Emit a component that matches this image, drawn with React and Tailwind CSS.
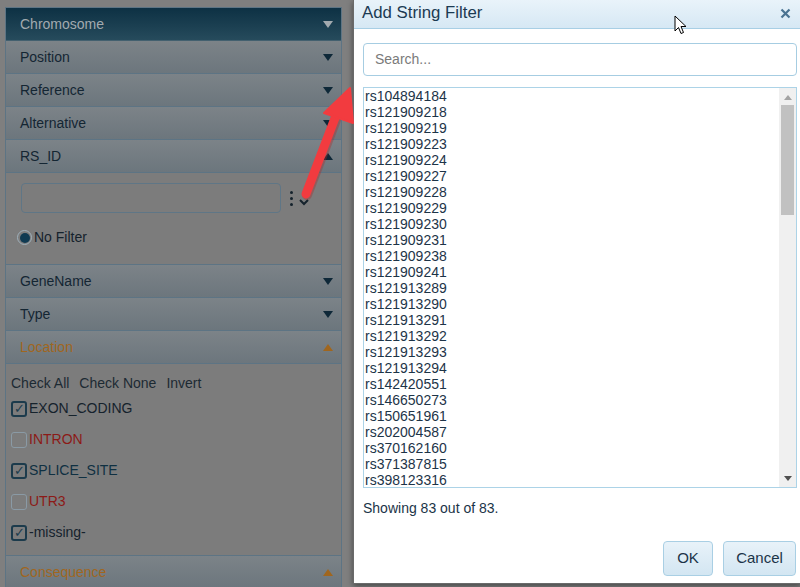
import React from "react";

const ids = [
  "rs104894184", "rs121909218", "rs121909219", "rs121909223", "rs121909224",
  "rs121909227", "rs121909228", "rs121909229", "rs121909230", "rs121909231",
  "rs121909238", "rs121909241", "rs121913289", "rs121913290", "rs121913291",
  "rs121913292", "rs121913293", "rs121913294", "rs142420551", "rs146650273",
  "rs150651961", "rs202004587", "rs370162160", "rs371387815", "rs398123316",
];

function Tri({ up, color }) {
  return (
    <svg width="10" height="7" viewBox="0 0 10 7">
      {up ? <path d="M0 7 L5 0 L10 7 Z" fill={color} /> : <path d="M0 0 L10 0 L5 7 Z" fill={color} />}
    </svg>
  );
}

function Header({ label, up, active, open }) {
  if (active) {
    return (
      <div className="h-[33px] flex items-center justify-between pl-[14px] pr-[8px] border-b border-[#43606f] bg-gradient-to-b from-[#0d3144] to-[#264b5c] text-[#a2aaaf]">
        <span>{label}</span>
        <Tri color="#a2aaaf" />
      </div>
    );
  }
  return (
    <div className="h-[33px] flex items-center justify-between pl-[14px] pr-[8px] border-b border-[#5d7484] bg-gradient-to-b from-[#7c8388] to-[#6c767d]">
      <span className={open ? "text-[#a0661e]" : "text-[#142633]"}>{label}</span>
      <Tri up={up} color={open ? "#a0661e" : "#0e2838"} />
    </div>
  );
}

function Check({ checked, label, red }) {
  return (
    <div className="h-[31px] flex items-center">
      {checked ? (
        <span className="w-[16px] h-[16px] rounded-[3px] border-2 border-[#1c3b4c] flex items-center justify-center text-[13px] leading-none text-[#1c3b4c]">
          ✓
        </span>
      ) : (
        <span className="w-[16px] h-[16px] rounded-[3px] border border-[#8a9aa5]" />
      )}
      <span className={"ml-[2px] " + (red ? "text-[#8c1a17]" : label === "SPLICE_SITE" ? "text-[#0f3042]" : "text-[#15222c]")}>
        {label}
      </span>
    </div>
  );
}

export default function App() {
  return (
    <div className="relative w-[800px] h-[587px] overflow-hidden bg-[#7f7f7f] font-['Liberation_Sans',Arial,sans-serif] text-[14px]">
      {/* side filter panel (dimmed behind dialog) */}
      <div className="pt-[7px] pl-[5px]">
        <div className="w-[337px] border-x border-t border-[#5d7484]">
          <Header label="Chromosome" active />
          <Header label="Position" />
          <Header label="Reference" />
          <Header label="Alternative" />
          <Header label="RS_ID" up />
          <div className="h-[92px] border-b border-[#5d7484] bg-[#7c7c7c] pt-[10px] pl-[15px]">
            <div className="flex items-center">
              <div className="w-[260px] h-[30px] rounded-[4px] border border-[#5f7686]" />
              <div className="ml-[9px] flex flex-col gap-[3px]">
                <span className="w-[3px] h-[3px] rounded-full bg-[#14222c]" />
                <span className="w-[3px] h-[3px] rounded-full bg-[#14222c]" />
                <span className="w-[3px] h-[3px] rounded-full bg-[#14222c]" />
              </div>
              <svg className="ml-[6px] mt-[8px]" width="10" height="7" viewBox="0 0 10 7">
                <path d="M1 1 L5 5 L9 1" fill="none" stroke="#14222c" strokeWidth="2" />
              </svg>
            </div>
            <div className="mt-[14px] -ml-[4px] flex items-center">
              <span className="w-[15px] h-[15px] rounded-full border-[1.5px] border-[#9fb0bb] flex items-center justify-center">
                <span className="w-[10px] h-[10px] rounded-full bg-[#0f3a52]" />
              </span>
              <span className="ml-[2px] text-[#15222c]">No Filter</span>
            </div>
          </div>
          <Header label="GeneName" />
          <Header label="Type" />
          <Header label="Location" up open />
          <div className="h-[192px] border-b border-[#5d7484] bg-[#7c7c7c] pl-[5px] pt-[10px]">
            <div className="flex gap-[10px] text-[#1c2a33] h-[19px] items-center">
              <span>Check All</span>
              <span>Check None</span>
              <span>Invert</span>
            </div>
            <div>
              <Check checked label="EXON_CODING" />
              <Check label="INTRON" red />
              <Check checked label="SPLICE_SITE" />
              <Check label="UTR3" red />
              <Check checked label="-missing-" />
            </div>
          </div>
          <Header label="Consequence" up open />
        </div>
      </div>

      {/* dialog */}
      <div className="absolute left-[353px] top-0 w-[448px] h-[584px] bg-white border-l border-b border-[#6a6a6a] shadow-[0_2px_6px_rgba(0,0,0,0.45)] flex flex-col">
        <div className="h-[29px] flex items-center justify-between pl-[8px] pr-[10px] pb-[2px] border-b border-[#a8cfe5] bg-gradient-to-b from-[#e9f3fa] to-[#d6e8f4]">
          <span className="text-[16.8px] text-[#1b3a52]">Add String Filter</span>
          <svg width="11" height="11" viewBox="0 0 11 11">
            <path d="M1.5 1.5 L9.5 9.5 M9.5 1.5 L1.5 9.5" stroke="#4a7391" strokeWidth="2.2" />
          </svg>
        </div>
        <div className="pl-[9px] pr-[4px] flex flex-col flex-1">
          <div className="mt-[14px] h-[33px] rounded-[4px] border border-[#a6cde2] flex items-center pl-[11px] text-[#7a7a7a]">
            Search...
          </div>
          <div className="mt-[11px] h-[401px] border border-[#acd3e7] flex overflow-hidden">
            <div className="flex-1 overflow-hidden pl-[1px] text-[#1d3448] leading-[16px]">
              {ids.map((id) => (
                <div key={id}>{id}</div>
              ))}
            </div>
            <div className="w-[17px] bg-[#f0f0f0] flex flex-col items-center">
              <svg className="mt-[7px]" width="8" height="5" viewBox="0 0 8 5">
                <path d="M0 5 L4 0 L8 5 Z" fill="#a3a3a3" />
              </svg>
              <div className="mt-[5px] w-[13px] h-[110px] bg-[#c1c1c1]" />
              <div className="flex-1" />
              <svg className="mb-[6px]" width="8" height="5" viewBox="0 0 8 5">
                <path d="M0 0 L8 0 L4 5 Z" fill="#505050" />
              </svg>
            </div>
          </div>
          <div className="mt-[10px] text-[#1b3448]">Showing 83 out of 83.</div>
          <div className="mt-[22px] flex justify-end gap-[10px] pr-[1px]">
            <button className="w-[50px] h-[35px] rounded-[4px] border border-[#a9cfe4] bg-gradient-to-b from-[#e8f2f9] to-[#d3e6f2] text-[15px] text-[#1b3448]">
              OK
            </button>
            <button className="w-[73px] h-[35px] rounded-[4px] border border-[#a9cfe4] bg-gradient-to-b from-[#e8f2f9] to-[#d3e6f2] text-[15px] text-[#1b3448]">
              Cancel
            </button>
          </div>
        </div>
      </div>

      {/* annotation arrow */}
      <svg className="absolute left-0 top-0 pointer-events-none" width="800" height="587" viewBox="0 0 800 587">
        <line x1="307" y1="195" x2="336" y2="120" stroke="#b32626" strokeWidth="10" strokeLinecap="round" opacity="0.35" />
        <line x1="306" y1="194" x2="335" y2="118" stroke="#f23b3f" strokeWidth="9" strokeLinecap="round" />
        <path d="M350 88 L324 113 L353 123 Z" fill="#f23b3f" stroke="#f23b3f" strokeWidth="2" strokeLinejoin="round" />
      </svg>

      {/* mouse cursor */}
      <svg className="absolute left-[674px] top-[15px]" width="13" height="21" viewBox="0 0 13 21">
        <path d="M1 1 L1 16 L4.5 12.5 L7 18.5 L9.5 17.5 L7 11.5 L12 11.5 Z" fill="#fff" stroke="#000" strokeWidth="1" strokeLinejoin="round" />
      </svg>
    </div>
  );
}
